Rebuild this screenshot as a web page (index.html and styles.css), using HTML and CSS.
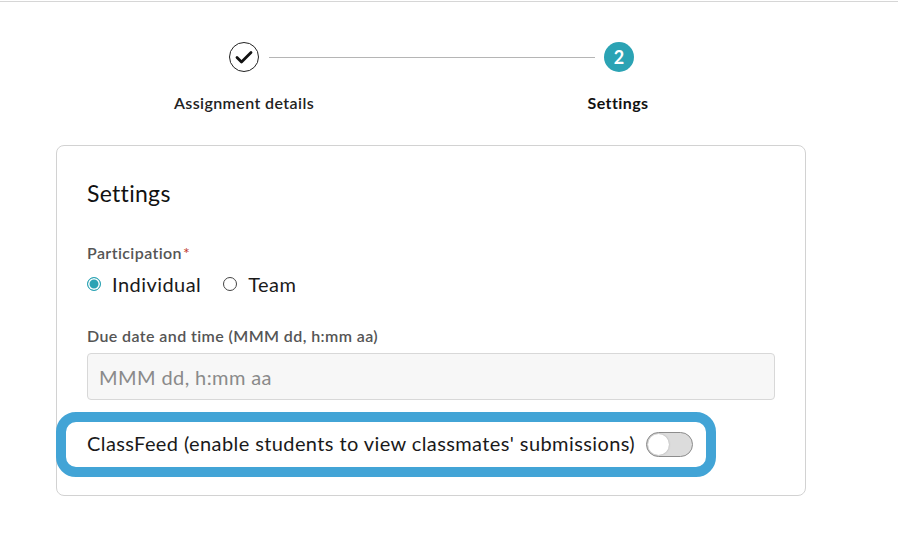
FILE: index.html
```html
<!DOCTYPE html>
<html>
<head>
<meta charset="utf-8">
<link rel="stylesheet" href="styles.css">
</head>
<body>
<div class="topline"></div>
<div class="stepper">
  <div class="steps">
    <div class="circle done">
      <svg width="18" height="14" viewBox="0 0 18 14"><path d="M2 7.5 L6.5 12 L16 2.5" fill="none" stroke="#111" stroke-width="2.8" stroke-linecap="round" stroke-linejoin="round"/></svg>
    </div>
    <div class="connector"></div>
    <div class="circle active">2</div>
  </div>
  <div class="labels">
    <div class="label">Assignment details</div>
    <div class="label strong">Settings</div>
  </div>
</div>

<div class="card">
  <h2 class="card-title">Settings</h2>
  <div class="field-label">Participation<span class="req">*</span></div>
  <div class="radios">
    <label class="radio"><span class="dot checked"></span>Individual</label>
    <label class="radio"><span class="dot"></span>Team</label>
  </div>
  <div class="field-label due">Due date and time (MMM dd, h:mm aa)</div>
  <div class="input">MMM dd, h:mm aa</div>
  <div class="highlight">
    <span class="feed-text">ClassFeed (enable students to view classmates' submissions)</span>
    <span class="toggle"><span class="knob"></span></span>
  </div>
</div>
</body>
</html>
```
FILE: styles.css
```css
* { box-sizing: border-box; }
html, body { margin: 0; padding: 0; background: #fff; }
body {
  font-family: Lato, "Open Sans", sans-serif;
  color: #1f1f1f;
  width: 898px;
  height: 543px;
  overflow: hidden;
}
.topline {
  height: 1px;
  margin-top: 1px;
  background: #d6d6d6;
}
.stepper {
  padding-top: 40px;
}
.steps {
  display: flex;
  align-items: center;
  padding-left: 229px;
}
.circle {
  width: 30px;
  height: 30px;
  border-radius: 50%;
  display: flex;
  align-items: center;
  justify-content: center;
}
.circle.done {
  border: 1.5px solid #222;
}
.circle.active {
  background: #2ba3b4;
  color: #fff;
  font-size: 18px;
  font-weight: 700;
}
.connector {
  width: 326px;
  height: 1px;
  background: #b5b5b5;
  margin: 0 9px 0 10px;
}
.labels {
  display: flex;
  gap: 174px;
  padding-top: 22px;
  padding-left: 144px;
  font-size: 16px;
  letter-spacing: 0.4px;
  font-weight: 600;
  color: #222;
}
.label { width: 200px; text-align: center; line-height: 18px; }
.label.strong { font-weight: 700; color: #111; }

.card {
  margin: 33px 0 0 56px;
  width: 750px;
  height: 351px;
  border: 1px solid #d2d2d2;
  border-radius: 8px;
  padding: 0 30px 0 30px;
}
.card-title {
  margin: 34px 0 0 0;
  font-size: 23px;
  letter-spacing: 0.3px;
  font-weight: 400;
  color: #111;
  line-height: 26px;
}
.field-label {
  margin-top: 38px;
  font-size: 16px;
  letter-spacing: 0.4px;
  font-weight: 600;
  color: #555;
  line-height: 18px;
}
.req { color: #c0392b; font-weight: 400; margin-left: 1px; }
.radios {
  display: flex;
  gap: 22px;
  margin-top: 11px;
}
.radio {
  display: flex;
  align-items: center;
  font-size: 20px;
  letter-spacing: 0.45px;
  color: #1a1a1a;
  line-height: 22px;
}
.dot {
  width: 14px;
  height: 14px;
  border-radius: 50%;
  border: 1.5px solid #444;
  margin-right: 11px;
  display: inline-block;
}
.dot.checked {
  border: 1.5px solid #2ba3b4;
  background: #2ba3b4;
  box-shadow: inset 0 0 0 1.5px #fff;
}
.field-label.due { margin-top: 32px; }
.input {
  margin-top: 8px;
  width: 688px;
  height: 47px;
  background: #f7f7f7;
  border: 1px solid #d8d8d8;
  border-radius: 4px;
  padding: 0 11px;
  display: flex;
  align-items: center;
  font-size: 20px;
  letter-spacing: 0.4px;
  color: #8a8a8a;
}
.highlight {
  margin: 12px 0 0 -31px;
  width: 660px;
  height: 65px;
  border: 10px solid #42a4d6;
  border-radius: 20px;
  display: flex;
  align-items: center;
  padding-left: 21px;
  padding-bottom: 3px;
}
.feed-text {
  font-size: 20px;
  letter-spacing: 0.4px;
  color: #1a1a1a;
}
.toggle {
  margin-left: 11px;
  margin-top: 2px;
  width: 47px;
  height: 25px;
  border-radius: 13px;
  background: #dcdcdc;
  border: 1px solid #8c8c8c;
  position: relative;
}
.knob {
  position: absolute;
  left: 1px;
  top: 1px;
  width: 21px;
  height: 21px;
  border-radius: 50%;
  background: #fff;
  box-shadow: 0 0 2px rgba(0,0,0,0.25);
}
```
